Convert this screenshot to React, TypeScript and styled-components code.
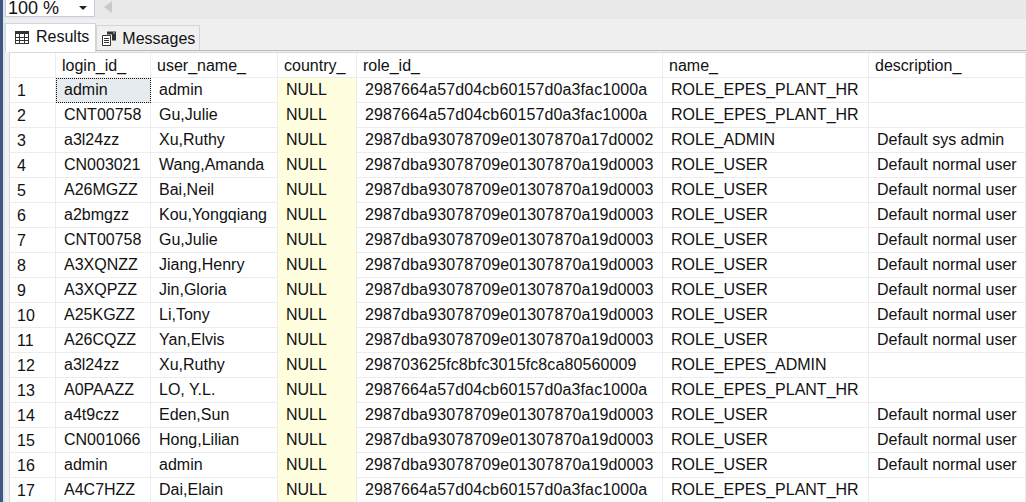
import styled, { createGlobalStyle } from "styled-components"

const rows = [
  ["admin", "admin", "2987664a57d04cb60157d0a3fac1000a", "ROLE_EPES_PLANT_HR", ""],
  ["CNT00758", "Gu,Julie", "2987664a57d04cb60157d0a3fac1000a", "ROLE_EPES_PLANT_HR", ""],
  ["a3l24zz", "Xu,Ruthy", "2987dba93078709e01307870a17d0002", "ROLE_ADMIN", "Default sys admin"],
  ["CN003021", "Wang,Amanda", "2987dba93078709e01307870a19d0003", "ROLE_USER", "Default normal user"],
  ["A26MGZZ", "Bai,Neil", "2987dba93078709e01307870a19d0003", "ROLE_USER", "Default normal user"],
  ["a2bmgzz", "Kou,Yongqiang", "2987dba93078709e01307870a19d0003", "ROLE_USER", "Default normal user"],
  ["CNT00758", "Gu,Julie", "2987dba93078709e01307870a19d0003", "ROLE_USER", "Default normal user"],
  ["A3XQNZZ", "Jiang,Henry", "2987dba93078709e01307870a19d0003", "ROLE_USER", "Default normal user"],
  ["A3XQPZZ", "Jin,Gloria", "2987dba93078709e01307870a19d0003", "ROLE_USER", "Default normal user"],
  ["A25KGZZ", "Li,Tony", "2987dba93078709e01307870a19d0003", "ROLE_USER", "Default normal user"],
  ["A26CQZZ", "Yan,Elvis", "2987dba93078709e01307870a19d0003", "ROLE_USER", "Default normal user"],
  ["a3l24zz", "Xu,Ruthy", "298703625fc8bfc3015fc8ca80560009", "ROLE_EPES_ADMIN", ""],
  ["A0PAAZZ", "LO, Y.L.", "2987664a57d04cb60157d0a3fac1000a", "ROLE_EPES_PLANT_HR", ""],
  ["a4t9czz", "Eden,Sun", "2987dba93078709e01307870a19d0003", "ROLE_USER", "Default normal user"],
  ["CN001066", "Hong,Lilian", "2987dba93078709e01307870a19d0003", "ROLE_USER", "Default normal user"],
  ["admin", "admin", "2987dba93078709e01307870a19d0003", "ROLE_USER", "Default normal user"],
  ["A4C7HZZ", "Dai,Elain", "2987664a57d04cb60157d0a3fac1000a", "ROLE_EPES_PLANT_HR", ""],
]

const headers = ["login_id_", "user_name_", "country_", "role_id_", "name_", "description_"]

export default function App() {
  return (
    <>
      <GlobalStyle />
      <Page>
        <SideStrip />
        <Main>
          <Toolbar>
            <ZoomBox>
              <span>100 %</span>
              <Caret />
            </ZoomBox>
            <ScrollArrow />
          </Toolbar>
          <TabBar>
            <Tab $active>
              <svg width="14" height="13" viewBox="0 0 14 13">
                <rect x="0.5" y="0.5" width="13" height="12" fill="#fff" stroke="#333" />
                <rect x="0" y="0" width="14" height="3" fill="#333" />
                <path d="M0 6.5h14M0 9.5h14M4.5 0v13M9.5 0v13" stroke="#333" fill="none" />
              </svg>
              Results
            </Tab>
            <Tab>
              <svg width="16" height="15" viewBox="0 0 16 15">
                <path d="M1.5 4.5h8v10h-8z" fill="#fff" stroke="#333" />
                <path d="M3 7.5h5M3 9.5h5M3 11.5h5" stroke="#333" fill="none" />
                <path d="M6 0.5h9v9h-4v-6h-5z" fill="#333" />
                <path d="M12 2h2" stroke="#ccc" fill="none" />
              </svg>
              Messages
            </Tab>
          </TabBar>
          <Grid>
            <HeaderRow>
              <NumberHead />
              {headers.map((h) => (
                <HeadCell key={h}>{h}</HeadCell>
              ))}
            </HeaderRow>
            {rows.map((r, i) => (
              <Row key={i}>
                <NumberCell>{i + 1}</NumberCell>
                <Cell $selected={i === 0}>{r[0]}</Cell>
                <Cell>{r[1]}</Cell>
                <Cell $null>NULL</Cell>
                <RoleCell>{r[2]}</RoleCell>
                <Cell>{r[3]}</Cell>
                <Cell>{r[4]}</Cell>
              </Row>
            ))}
          </Grid>
        </Main>
      </Page>
    </>
  )
}

const GlobalStyle = createGlobalStyle`
  html, body {
    margin: 0;
    padding: 0;
    overflow: hidden;
    background: #f0f0f0;
  }
`

const Page = styled.div`
  display: flex;
  width: 1026px;
  height: 502px;
  overflow: hidden;
  font-family: "Liberation Sans", Arial, sans-serif;
  font-size: 16px;
  color: #111;
`

const SideStrip = styled.div`
  width: 5px;
  flex: none;
  box-sizing: border-box;
  background: #3f5680;
  border-right: 2px solid #dfe3ea;
`

const Main = styled.div`
  flex: 1;
  min-width: 0;
  display: flex;
  flex-direction: column;
`

const Toolbar = styled.div`
  height: 19px;
  flex: none;
  display: flex;
  align-items: flex-start;
  gap: 9px;
  background: #e9e9ea;
`

const ZoomBox = styled.div`
  width: 90px;
  height: 17px;
  box-sizing: border-box;
  display: flex;
  align-items: center;
  justify-content: space-between;
  padding: 0 7px 0 2px;
  background: #fff;
  border: 1px solid #c4cbe0;
  border-top: none;
  font-size: 18px;
  line-height: 16px;
`

const Caret = styled.div`
  width: 0;
  height: 0;
  border-left: 4px solid transparent;
  border-right: 4px solid transparent;
  border-top: 4px solid #222;
`

const ScrollArrow = styled.div`
  width: 0;
  height: 0;
  margin-top: 1px;
  border-top: 6px solid transparent;
  border-bottom: 6px solid transparent;
  border-right: 8px solid #c9c9c9;
`

const TabBar = styled.div`
  height: 32px;
  flex: none;
  box-sizing: border-box;
  display: flex;
  align-items: flex-end;
  margin-bottom: 1px;
  background: #f0f0f0;
  border-bottom: 1px solid #b9b9b9;
`

const Tab = styled.div<{ $active?: boolean }>`
  display: flex;
  align-items: center;
  box-sizing: border-box;
  height: ${({ $active }) => ($active ? "29px" : "25px")};
  gap: ${({ $active }) => ($active ? "7px" : "5px")};
  padding: ${({ $active }) => ($active ? "0 6px 2px 9px" : "1px 4px 0 4px")};
  background: ${({ $active }) => ($active ? "#ffffff" : "#f0f0f0")};
  border: 1px solid #d4d4d4;
  border-bottom: none;
  margin-bottom: ${({ $active }) => ($active ? "-2px" : "0")};
  position: relative;
`

const Grid = styled.div`
  flex: 1;
  margin-left: 4px;
  background: #fff;
  border-left: 1px solid #d9d9d9;
  border-top: 1px solid #d9d9d9;
  overflow: hidden;
`

const HeaderRow = styled.div`
  display: grid;
  grid-template-columns: 46px 95px 127px 79px 306px 206px 1fr;
  height: 25px;
  box-sizing: border-box;
  border-bottom: 1px solid #ececec;
`

const Row = styled(HeaderRow)``

const NumberHead = styled.div`
  border-right: 1px solid #ececec;
`

const HeadCell = styled.div`
  padding: 1px 0 0 6px;
  line-height: 23px;
  border-right: 1px solid #ececec;
  white-space: nowrap;
`

const NumberCell = styled.div`
  padding-left: 7px;
  line-height: 25px;
  border-right: 1px solid #ececec;
`

const Cell = styled.div<{ $null?: boolean; $selected?: boolean }>`
  padding-left: 8px;
  line-height: 24px;
  white-space: nowrap;
  box-sizing: border-box;
  border-right: 1px solid #ececec;
  background: ${({ $null, $selected }) => ($null ? "#ffffe0" : $selected ? "#e6ebf0" : "transparent")};
  ${({ $selected }) => $selected && "outline: 1px dotted #111; outline-offset: -1px;"}
`

const RoleCell = styled(Cell)`
  letter-spacing: 0.12px;
`
